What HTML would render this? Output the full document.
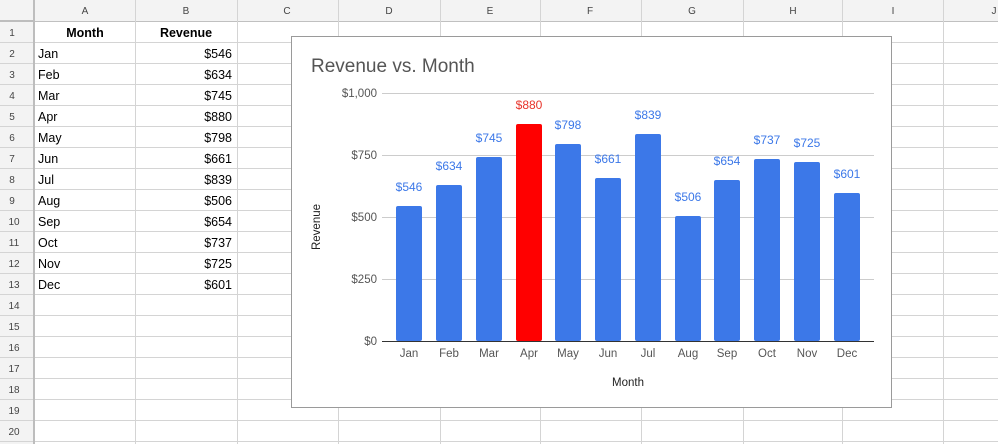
<!DOCTYPE html>
<html><head><meta charset="utf-8"><style>
body{margin:0;width:998px;height:444px;overflow:hidden;background:#fff;font-family:"Liberation Sans",Arial,sans-serif;position:relative}
.a{position:absolute}
</style></head><body>
<svg class="a" style="left:0;top:0" width="998" height="444">
<rect x="0" y="0" width="998" height="21" fill="#f3f3f3"/>
<rect x="0" y="0" width="34" height="444" fill="#f3f3f3"/>
<g stroke="#d4d4d4" stroke-width="1">
<line x1="0" y1="21.5" x2="998" y2="21.5" stroke="#c0c0c0"/>
<!-- rows -->
<g id="rows"></g>
</g>
<g stroke="#d4d4d4">
<line x1="0" y1="42.5" x2="998" y2="42.5"/><line x1="0" y1="63.5" x2="998" y2="63.5"/><line x1="0" y1="84.5" x2="998" y2="84.5"/><line x1="0" y1="105.5" x2="998" y2="105.5"/><line x1="0" y1="126.5" x2="998" y2="126.5"/><line x1="0" y1="147.5" x2="998" y2="147.5"/><line x1="0" y1="168.5" x2="998" y2="168.5"/><line x1="0" y1="189.5" x2="998" y2="189.5"/><line x1="0" y1="210.5" x2="998" y2="210.5"/><line x1="0" y1="231.5" x2="998" y2="231.5"/><line x1="0" y1="252.5" x2="998" y2="252.5"/><line x1="0" y1="273.5" x2="998" y2="273.5"/><line x1="0" y1="294.5" x2="998" y2="294.5"/><line x1="0" y1="315.5" x2="998" y2="315.5"/><line x1="0" y1="336.5" x2="998" y2="336.5"/><line x1="0" y1="357.5" x2="998" y2="357.5"/><line x1="0" y1="378.5" x2="998" y2="378.5"/><line x1="0" y1="399.5" x2="998" y2="399.5"/><line x1="0" y1="420.5" x2="998" y2="420.5"/><line x1="0" y1="441.5" x2="998" y2="441.5"/>
<line x1="135.5" y1="0" x2="135.5" y2="444"/><line x1="237.5" y1="0" x2="237.5" y2="444"/><line x1="338.5" y1="0" x2="338.5" y2="444"/><line x1="440.5" y1="0" x2="440.5" y2="444"/><line x1="540.5" y1="0" x2="540.5" y2="444"/><line x1="641.5" y1="0" x2="641.5" y2="444"/><line x1="743.5" y1="0" x2="743.5" y2="444"/><line x1="842.5" y1="0" x2="842.5" y2="444"/><line x1="943.5" y1="0" x2="943.5" y2="444"/>
</g>
<line x1="34" y1="0" x2="34" y2="444" stroke="#bdbdbd" stroke-width="2"/>
<line x1="0" y1="21" x2="34" y2="21" stroke="#bdbdbd" stroke-width="2"/>
<g font-size="10" fill="#444" text-anchor="middle">
<text x="85" y="14">A</text><text x="186" y="14">B</text><text x="287" y="14">C</text><text x="389" y="14">D</text><text x="490" y="14">E</text><text x="590" y="14">F</text><text x="692" y="14">G</text><text x="793" y="14">H</text><text x="893" y="14">I</text><text x="994" y="14">J</text>
<text x="12" y="36">1</text><text x="12" y="57">2</text><text x="12" y="78">3</text><text x="12" y="99">4</text><text x="12" y="120">5</text><text x="12" y="141">6</text><text x="12" y="162">7</text><text x="12" y="183">8</text><text x="12" y="204">9</text><text x="14" y="225">10</text><text x="14" y="246">11</text><text x="14" y="267">12</text><text x="14" y="288">13</text><text x="14" y="309">14</text><text x="14" y="330">15</text><text x="14" y="351">16</text><text x="14" y="372">17</text><text x="14" y="393">18</text><text x="14" y="414">19</text><text x="14" y="435">20</text>
</g>
<g font-size="12.5" fill="#000">
<text x="85" y="37" text-anchor="middle" font-weight="bold">Month</text>
<text x="186" y="37" text-anchor="middle" font-weight="bold">Revenue</text>
<text x="38" y="58">Jan</text><text x="38" y="79">Feb</text><text x="38" y="100">Mar</text><text x="38" y="121">Apr</text><text x="38" y="142">May</text><text x="38" y="163">Jun</text><text x="38" y="184">Jul</text><text x="38" y="205">Aug</text><text x="38" y="226">Sep</text><text x="38" y="247">Oct</text><text x="38" y="268">Nov</text><text x="38" y="289">Dec</text>
</g>
<g font-size="12.5" fill="#000" text-anchor="end">
<text x="232" y="58">$546</text><text x="232" y="79">$634</text><text x="232" y="100">$745</text><text x="232" y="121">$880</text><text x="232" y="142">$798</text><text x="232" y="163">$661</text><text x="232" y="184">$839</text><text x="232" y="205">$506</text><text x="232" y="226">$654</text><text x="232" y="247">$737</text><text x="232" y="268">$725</text><text x="232" y="289">$601</text>
</g>
<!-- chart -->
<rect x="291.5" y="36.5" width="600" height="371" fill="#fff" stroke="#9a9a9a"/>
<text x="311" y="72" font-size="19" fill="#555">Revenue vs. Month</text>
<g stroke="#ccc"><line x1="382" y1="93.5" x2="874" y2="93.5"/><line x1="382" y1="155.5" x2="874" y2="155.5"/><line x1="382" y1="217.5" x2="874" y2="217.5"/><line x1="382" y1="279.5" x2="874" y2="279.5"/></g>
<g font-size="11.5" fill="#555" text-anchor="end">
<text x="377" y="97">$1,000</text><text x="377" y="159">$750</text><text x="377" y="221">$500</text><text x="377" y="283">$250</text><text x="377" y="345">$0</text>
</g>
<text transform="translate(320,227) rotate(-90)" font-size="11.5" fill="#222" text-anchor="middle">Revenue</text>
<g fill="#3c78e8">
<rect x="396" y="206" width="26" height="135" rx="2"/>
<rect x="436" y="185" width="26" height="156" rx="2"/>
<rect x="476" y="157" width="26" height="184" rx="2"/>
<rect x="555" y="144" width="26" height="197" rx="2"/>
<rect x="595" y="178" width="26" height="163" rx="2"/>
<rect x="635" y="134" width="26" height="207" rx="2"/>
<rect x="675" y="216" width="26" height="125" rx="2"/>
<rect x="714" y="180" width="26" height="161" rx="2"/>
<rect x="754" y="159" width="26" height="182" rx="2"/>
<rect x="794" y="162" width="26" height="179" rx="2"/>
<rect x="834" y="193" width="26" height="148" rx="2"/>
</g>
<rect x="516" y="124" width="26" height="217" rx="2" fill="#ff0000"/>
<line x1="382" y1="341.5" x2="874" y2="341.5" stroke="#333"/>
<g font-size="12" fill="#3c78e8" text-anchor="middle">
<text x="409" y="191">$546</text><text x="449" y="170">$634</text><text x="489" y="142">$745</text>
<text x="568" y="129">$798</text><text x="608" y="163">$661</text><text x="648" y="119">$839</text><text x="688" y="201">$506</text><text x="727" y="165">$654</text><text x="767" y="144">$737</text><text x="807" y="147">$725</text><text x="847" y="178">$601</text>
</g>
<text x="529" y="109" font-size="12" fill="#e8332a" text-anchor="middle">$880</text>
<g font-size="11.5" fill="#555" text-anchor="middle">
<text x="409" y="357">Jan</text><text x="449" y="357">Feb</text><text x="489" y="357">Mar</text><text x="529" y="357">Apr</text><text x="568" y="357">May</text><text x="608" y="357">Jun</text><text x="648" y="357">Jul</text><text x="688" y="357">Aug</text><text x="727" y="357">Sep</text><text x="767" y="357">Oct</text><text x="807" y="357">Nov</text><text x="847" y="357">Dec</text>
</g>
<text x="628" y="386" font-size="11.5" fill="#222" text-anchor="middle">Month</text>
</svg>
</body></html>
